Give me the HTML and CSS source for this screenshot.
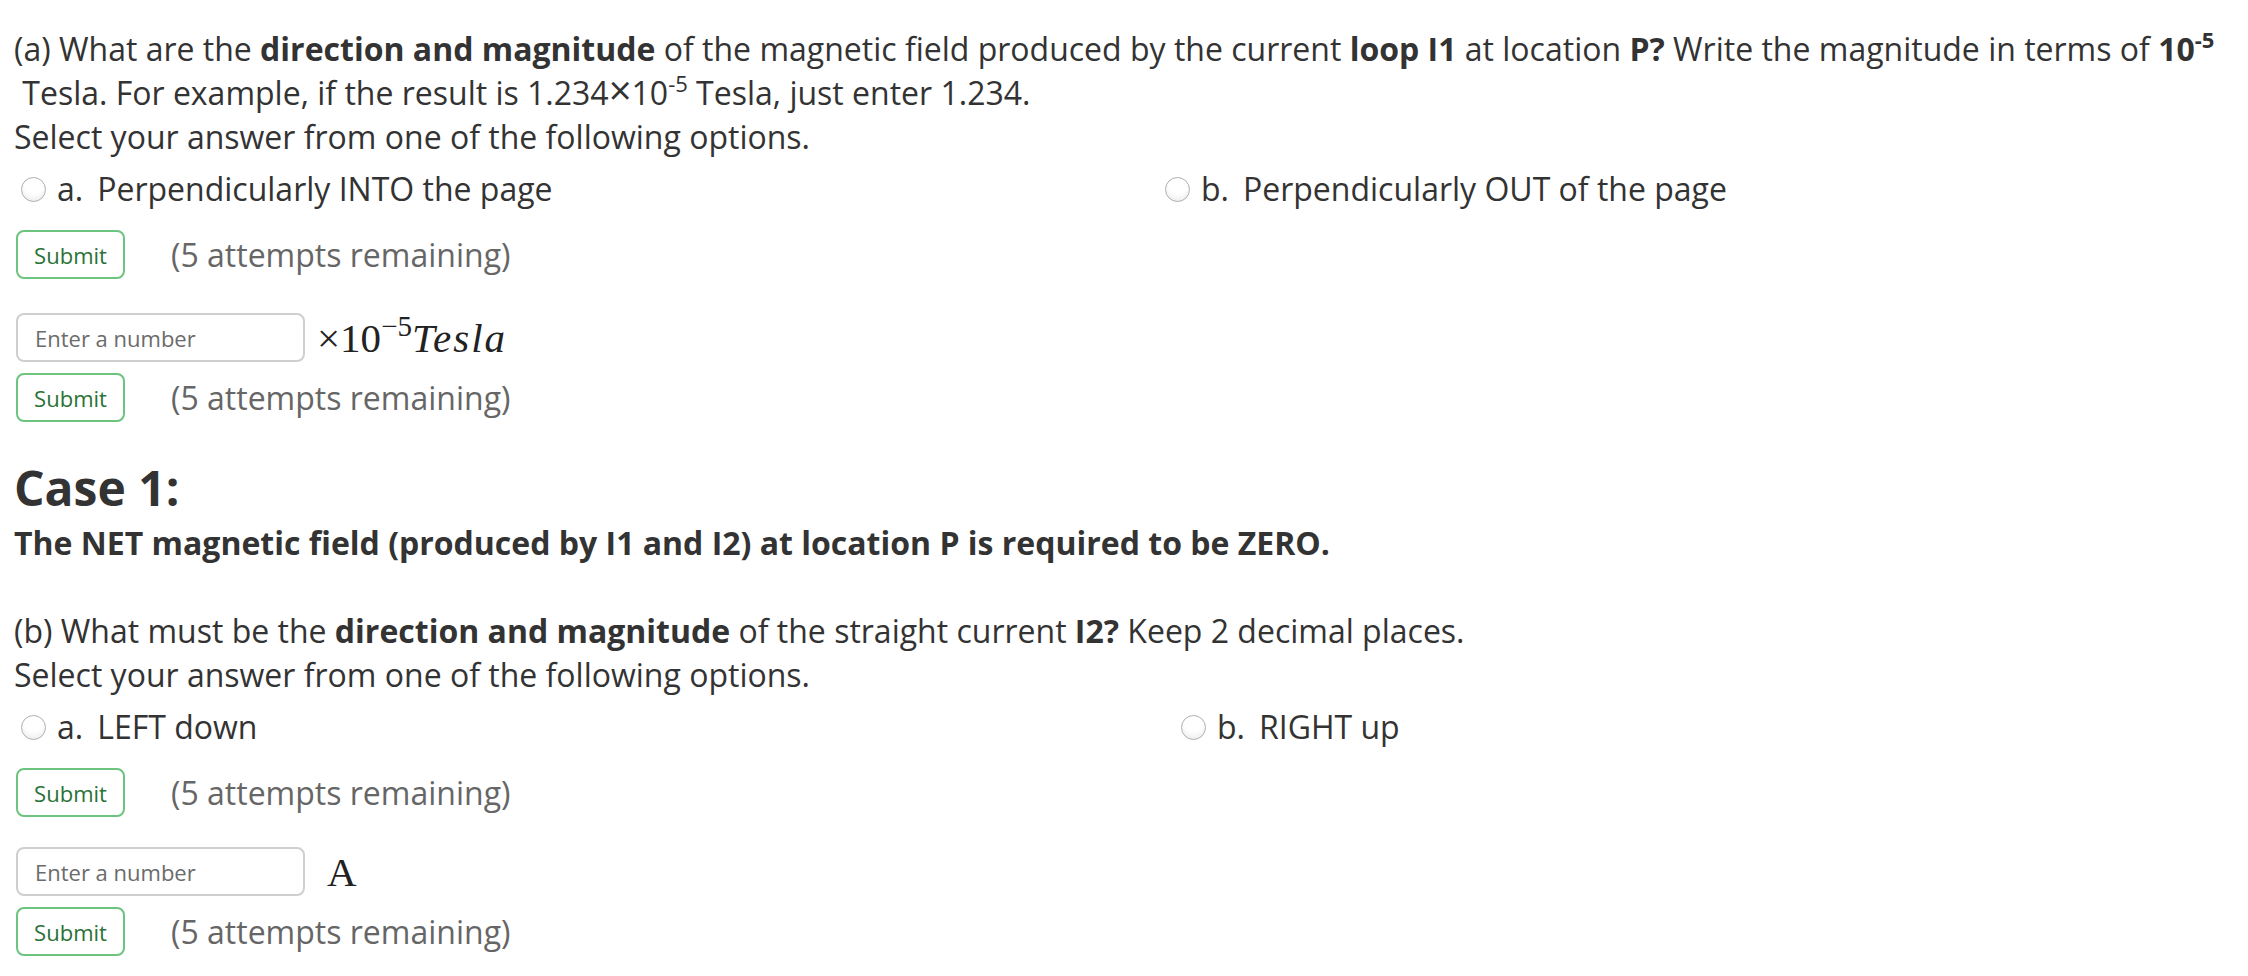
FILE: index.html
```html
<!DOCTYPE html>
<html lang="en">
<head>
  <meta charset="UTF-8" />
  <title>Magnetic field problem</title>
  <link rel="stylesheet" href="styles.css">
</head>
<body>
  <div class="page">
    <div class="question">
      <p class="line">(a) What are the <b>direction and magnitude</b> of the magnetic field produced by the current <b>loop I1</b> at location <b>P?</b> Write the magnitude in terms of <b>10<sup>-5</sup></b><br>&nbsp;Tesla. For example, if the result is 1.234<span class="times">×</span>10<sup>-5</sup> Tesla, just enter 1.234.</p>
      <p class="line">Select your answer from one of the following options.</p>
      <div class="choices choices-wide">
        <label class="choice"><input type="radio" name="qa"><span class="letter">a.</span>Perpendicularly INTO the page</label>
        <label class="choice"><input type="radio" name="qa"><span class="letter">b.</span>Perpendicularly OUT of the page</label>
      </div>
      <div class="submit-row">
        <button class="submit">Submit</button>
        <span class="attempts">(5 attempts remaining)</span>
      </div>
      <div class="answer-row">
        <input class="number" type="text" placeholder="Enter a number">
        <span class="math">×10<sup>−5</sup><i class="unit">Tesla</i></span>
      </div>
      <div class="submit-row tight">
        <button class="submit">Submit</button>
        <span class="attempts">(5 attempts remaining)</span>
      </div>
    </div>

    <h2 class="case-title">Case 1:</h2>
    <p class="line case-note"><b>The NET magnetic field (produced by I1 and I2) at location P is required to be ZERO.</b></p>

    <div class="question second">
      <p class="line">(b) What must be the <b>direction and magnitude</b> of the straight current <b>I2?</b> Keep 2 decimal places.</p>
      <p class="line">Select your answer from one of the following options.</p>
      <div class="choices choices-narrow">
        <label class="choice"><input type="radio" name="qb"><span class="letter">a.</span>LEFT down</label>
        <label class="choice"><input type="radio" name="qb"><span class="letter">b.</span>RIGHT up</label>
      </div>
      <div class="submit-row">
        <button class="submit">Submit</button>
        <span class="attempts">(5 attempts remaining)</span>
      </div>
      <div class="answer-row">
        <input class="number" type="text" placeholder="Enter a number">
        <span class="math amp">A</span>
      </div>
      <div class="submit-row tight">
        <button class="submit">Submit</button>
        <span class="attempts">(5 attempts remaining)</span>
      </div>
    </div>
  </div>
</body>
</html>
```

FILE: styles.css
```css
* {
  margin: 0;
  padding: 0;
  box-sizing: border-box;
}

body {
  background: #fff;
  color: #333;
  font-family: 'Open Sans', 'Noto Sans', sans-serif;
  font-size: 32px;
  line-height: 44px;
}

.page {
  padding: 27px 14px 0 14px;
}

.line {
  line-height: 44px;
}

sup {
  font-size: 22px;
  line-height: 0;
  vertical-align: 13px;
}

.times {
  font-size: 40px;
  line-height: 0;
}

/* радио-варианты */
.choices {
  display: grid;
  margin-top: 8px;
}

.choices-wide {
  grid-template-columns: 1144px 1fr;
}

.choices-narrow {
  grid-template-columns: 1160px 1fr;
}

.choice {
  display: flex;
  align-items: center;
  height: 44px;
  padding-left: 7px;
}

.choice input[type="radio"] {
  appearance: none;
  width: 25px;
  height: 25px;
  border-radius: 50%;
  border: 1px solid #b0b0b0;
  background: radial-gradient(circle at 50% 30%, #fff 45%, #e6e6e6 100%);
  margin-right: 11px;
  flex-shrink: 0;
}

.letter {
  margin-right: 14px;
}

/* кнопка и попытки */
.submit-row {
  display: flex;
  align-items: center;
  margin-top: 19px;
}

.submit-row.tight {
  margin-top: 11px;
}

.submit {
  width: 109px;
  height: 49px;
  margin-left: 2px;
  background: #fff;
  border: 2px solid #6cc47f;
  border-radius: 8px;
  color: #2a7236;
  font-family: 'Open Sans', sans-serif;
  font-size: 22px;
}

.attempts {
  margin-left: 46px;
  color: #666;
}

/* поле ввода числа */
.answer-row {
  display: flex;
  align-items: center;
  margin-top: 34px;
}

.second .answer-row {
  margin-top: 30px;
}

.number {
  width: 289px;
  height: 49px;
  margin-left: 2px;
  border: 2px solid #cfcfcf;
  border-radius: 8px;
  padding-left: 17px;
  font-family: 'Open Sans', sans-serif;
  font-size: 22px;
  color: #333;
}

.number::placeholder {
  color: #6b6b6b;
}

.math {
  margin-left: 12px;
  font-family: 'Liberation Serif', 'DejaVu Serif', serif;
  font-size: 41px;
  color: #222;
}

.math sup {
  font-size: 29px;
  vertical-align: 16px;
}

.unit {
  letter-spacing: 2px;
}

.math.amp {
  margin-left: 22px;
}

/* Case 1 */
.case-title {
  margin-top: 37px;
  font-size: 48px;
  font-weight: 700;
  line-height: 58px;
}

.case-note {
  margin-top: 4px;
}

.second {
  margin-top: 44px;
}
```
